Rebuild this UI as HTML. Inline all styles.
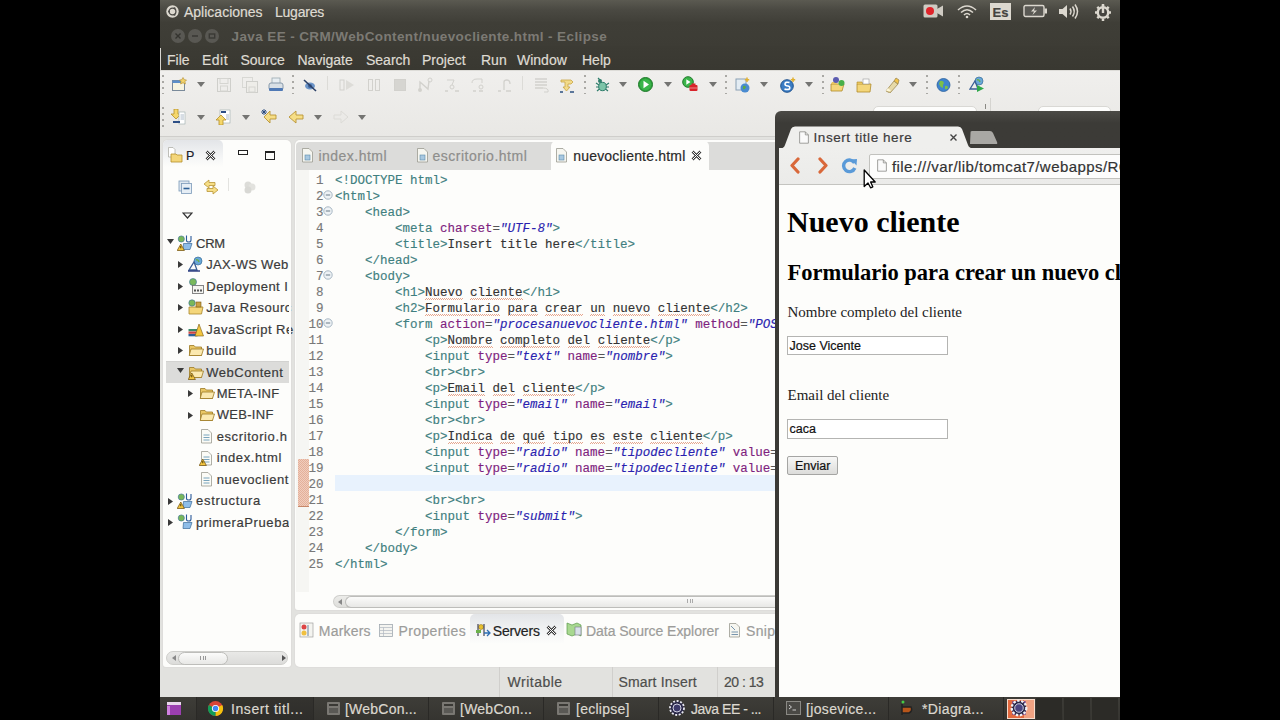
<!DOCTYPE html>
<html><head><meta charset="utf-8">
<style>
*{margin:0;padding:0;box-sizing:border-box}
html,body{width:1280px;height:720px;overflow:hidden;background:#000;font-family:"Liberation Sans",sans-serif}
.a{position:absolute}
.t{position:absolute;white-space:pre;line-height:1;-webkit-text-stroke:0.2px}
#scr{position:absolute;left:160px;top:0;width:960px;height:720px;overflow:hidden;background:#e5e4e2}
/* panel */
#panel{left:0;top:0;width:960px;height:22px;background:linear-gradient(#5b5a51,#4a4942 45%,#403f38)}
#title{left:0;top:22px;width:960px;height:24px;background:linear-gradient(#3f3e37,#3d3c35)}
#menu{left:0;top:46px;width:960px;height:24px;background:linear-gradient(#3c3b34,#393831)}
.mt{color:#dfdbd2;font-size:14px}
#tb{left:0;top:70px;width:960px;height:66px;background:linear-gradient(#f0efed,#e9e8e5);border-top:1px solid #dddcd8}
#tbline{left:0;top:136px;width:960px;height:1px;background:#cfcecb}
#body{left:0;top:137px;width:960px;height:560px;background:#e2e2df}
.pnl{background:#fdfdfb;border-radius:5px}
#taskbar{left:0;top:697px;width:960px;height:23px;background:#3b3a36}
.tk{color:#dcd8cf;font-size:14px}
.code{font-family:"Liberation Mono",monospace;font-size:12.5px;line-height:16px;white-space:pre;-webkit-text-stroke:0.15px}
.tg{color:#3f7f7f}.an{color:#7f1f7f}.av{color:#2a1fb0;font-style:italic}.tx{color:#333}.eq{color:#555}
.sq{background:repeating-conic-gradient(#e6a68e 0 25%,transparent 0 50%) 0 100%/2px 2px repeat-x}
.ln{color:#787878}
.tree{font-size:14px;color:#2e2e2e}
.dd{width:0;height:0;border-left:4px solid transparent;border-right:4px solid transparent;border-top:5px solid #747472}
.dsep{width:2px;border-left:2px dotted #a9a8a4}
</style></head><body>
<div id="scr">

 <div id="panel" class="a">
  <svg class="a" style="left:5px;top:4px" width="15" height="15" viewBox="0 0 15 15"><circle cx="7.5" cy="7.5" r="6.2" fill="#dcd8cf"/><circle cx="7.5" cy="7.5" r="3.4" fill="none" stroke="#4a4945" stroke-width="1.3"/><circle cx="7.5" cy="7.5" r="2.2" fill="#dcd8cf"/><circle cx="4" cy="7.5" r="1" fill="#4a4945"/><circle cx="9.5" cy="4.2" r="1" fill="#4a4945"/><circle cx="9.5" cy="10.8" r="1" fill="#4a4945"/></svg>
  <div class="t mt" style="left:24px;top:4.5px">Aplicaciones</div>
  <div class="t mt" style="left:115px;top:4.5px;letter-spacing:-0.23px">Lugares</div>
  <svg class="a" style="left:763px;top:4px" width="21" height="14" viewBox="0 0 21 14"><rect x="0.5" y="0.5" width="14" height="13" rx="1.5" fill="#cfcbc3"/><path d="M14 5 L20 1.5 L20 12.5 L14 9Z" fill="#cfcbc3"/><circle cx="7" cy="7" r="4" fill="#e0242b"/></svg>
  <svg class="a" style="left:797px;top:4px" width="20" height="15" viewBox="0 0 20 15"><path d="M1 6 Q10 -2 19 6" fill="none" stroke="#dcd8cf" stroke-width="1.6"/><path d="M4 8.5 Q10 3 16 8.5" fill="none" stroke="#dcd8cf" stroke-width="1.6"/><path d="M7 11 Q10 8 13 11" fill="none" stroke="#dcd8cf" stroke-width="1.6"/><circle cx="10" cy="13" r="1.3" fill="#dcd8cf"/></svg>
  <div class="a" style="left:830px;top:3px;width:21px;height:17px;background:#dcd8cf"></div>
  <div class="t" style="left:832.5px;top:5.5px;font-size:13px;color:#45443f;font-weight:bold">Es</div>
  <svg class="a" style="left:863px;top:4px" width="25" height="14" viewBox="0 0 25 14"><rect x="1" y="1.5" width="20" height="11" rx="1.5" fill="#5a5954" stroke="#dcd8cf" stroke-width="1.4"/><rect x="21.5" y="4.5" width="2.5" height="5" fill="#dcd8cf"/><path d="M12 3 L8 7.5 L11 7.5 L9.5 11 L14 6.5 L11 6.5Z" fill="#dcd8cf"/></svg>
  <svg class="a" style="left:898px;top:3px" width="21" height="17" viewBox="0 0 21 17"><path d="M1 6 H4.5 L9 2 V15 L4.5 11 H1Z" fill="#dcd8cf"/><path d="M12 5.5 Q14 8.5 12 11.5" fill="none" stroke="#dcd8cf" stroke-width="1.5"/><path d="M14.5 3.5 Q18 8.5 14.5 13.5" fill="none" stroke="#dcd8cf" stroke-width="1.5"/><path d="M17 1.5 Q22 8.5 17 15.5" fill="none" stroke="#dcd8cf" stroke-width="1.5"/></svg>
  <svg class="a" style="left:934px;top:3px" width="18" height="18" viewBox="0 0 18 18"><g fill="#dcd8cf"><circle cx="9" cy="9.5" r="6.5"/></g><circle cx="9" cy="9.5" r="4" fill="#45443f"/><rect x="7.8" y="2" width="2.4" height="8" fill="#dcd8cf"/><g stroke="#dcd8cf" stroke-width="2.5"><path d="M9 1 V3"/><path d="M1 9.5 H3"/><path d="M15 9.5 H17"/><path d="M3.3 3.8 L4.8 5.3"/><path d="M14.7 3.8 L13.2 5.3"/><path d="M3.3 15.2 L4.8 13.7"/><path d="M14.7 15.2 L13.2 13.7"/><path d="M9 16 V18"/></g></svg>
 </div>
 <div id="title" class="a">
  <div class="a wb" style="left:11px;top:7px"><svg width="14" height="14" viewBox="0 0 14 14"><circle cx="7" cy="7" r="7" fill="#595853"/><path d="M4.5 4.5 L9.5 9.5 M9.5 4.5 L4.5 9.5" stroke="#34332f" stroke-width="1.4"/></svg></div>
  <div class="a wb" style="left:28px;top:7px"><svg width="14" height="14" viewBox="0 0 14 14"><circle cx="7" cy="7" r="7" fill="#595853"/><path d="M4 7 H10" stroke="#3a3935" stroke-width="1.6"/></svg></div>
  <div class="a wb" style="left:45px;top:7px"><svg width="14" height="14" viewBox="0 0 14 14"><circle cx="7" cy="7" r="7" fill="#595853"/><rect x="4.3" y="5" width="5.4" height="4" fill="none" stroke="#3a3935" stroke-width="1.4"/></svg></div>
  <div class="t" style="left:71.5px;top:7.5px;font-size:13.5px;font-weight:bold;color:#7c7a74;-webkit-text-stroke:0;letter-spacing:0.39px">Java EE - CRM/WebContent/nuevocliente.html - Eclipse</div>
 </div>
 <div id="menu" class="a">
  <div class="a" style="left:0;top:2px;width:1px;height:22px;background:#d8d6d0"></div>
  <div class="t mt" style="left:7px;top:53px;top:7px">File</div>
  <div class="t mt" style="left:42px;top:7px;letter-spacing:0.47px">Edit</div>
  <div class="t mt" style="left:80.5px;top:7px">Source</div>
  <div class="t mt" style="left:137.5px;top:7px">Navigate</div>
  <div class="t mt" style="left:206px;top:7px">Search</div>
  <div class="t mt" style="left:262px;top:7px">Project</div>
  <div class="t mt" style="left:321px;top:7px">Run</div>
  <div class="t mt" style="left:357px;top:7px">Window</div>
  <div class="t mt" style="left:422px;top:7px">Help</div>
 </div>
 <div id="tb" class="a"></div>
 <div id="tbline" class="a"></div>
 <div class="a" style="left:0;top:0">
 <div class="a" style="left:2px;top:75px;width:2px;height:19px;background:repeating-linear-gradient(#a9a8a4 0 2px,transparent 2px 6px)"></div>
 <div class="a" style="left:2px;top:107px;width:2px;height:20px;background:repeating-linear-gradient(#a9a8a4 0 2px,transparent 2px 6px)"></div>
 <svg class="a" style="left:11px;top:77px" width="16" height="16" viewBox="0 0 16 16"><rect x="1.5" y="3.5" width="12" height="10" fill="#f7f4e0" stroke="#7a8a9a"/><rect x="1.5" y="3.5" width="12" height="2.5" fill="#5d8fc9"/><path d="M12 0.5 L13.3 2.7 L15.5 3 L14 4.6 L14.4 7 L12 5.8 L9.6 7 L10 4.6 L8.5 3 L10.7 2.7Z" fill="#f2d36b" stroke="#b08a2a" stroke-width="0.6"/></svg>
 <div class="a dd" style="left:37px;top:82px"></div>
 <svg class="a" style="left:56px;top:77px" width="16" height="16" viewBox="0 0 16 16"><rect x="1.5" y="1.5" width="13" height="13" fill="none" stroke="#cfcfcb"/><rect x="4" y="1.5" width="8" height="5" fill="none" stroke="#d5d5d1"/><rect x="4.5" y="9" width="7" height="5" fill="none" stroke="#d5d5d1"/></svg>
 <svg class="a" style="left:82px;top:77px" width="16" height="16" viewBox="0 0 16 16"><rect x="0.5" y="0.5" width="10" height="10" fill="none" stroke="#d8d8d4"/><rect x="4.5" y="4.5" width="11" height="11" fill="#eeede9" stroke="#cfcfcb"/><rect x="7" y="10" width="6" height="5" fill="none" stroke="#d5d5d1"/></svg>
 <svg class="a" style="left:108px;top:77px" width="16" height="16" viewBox="0 0 16 16"><rect x="4" y="1" width="8" height="6" fill="#e8eef2" stroke="#9aa8b0" stroke-width="0.8"/><rect x="1" y="6" width="14" height="7" rx="2" fill="#d9e0e6" stroke="#8899aa"/><rect x="1" y="11" width="14" height="3" rx="1" fill="#4f79b5"/></svg>
 <div class="a" style="left:132px;top:75px;width:2px;height:19px;background:repeating-linear-gradient(#a9a8a4 0 2px,transparent 2px 6px)"></div>
 <svg class="a" style="left:142px;top:77px" width="16" height="16" viewBox="0 0 16 16"><ellipse cx="8" cy="9" rx="5" ry="3.5" fill="#6b94c8"/><circle cx="8" cy="9" r="2" fill="#3a5f95"/><path d="M2 3 L14 14" stroke="#2a3f66" stroke-width="1.6"/></svg>
 <div class="a" style="left:167px;top:76px;width:1px;height:14px;background:#dcdbd7"></div>
 <svg class="a" style="left:179px;top:77px" width="16" height="16" viewBox="0 0 16 16"><rect x="1" y="3" width="4" height="10" fill="none" stroke="#d2d1cd"/><path d="M7 3 L15 8 L7 13Z" fill="#dddcd8"/></svg>
 <svg class="a" style="left:207px;top:77px" width="16" height="16" viewBox="0 0 16 16"><rect x="1.5" y="2.5" width="4" height="11" fill="none" stroke="#d2d1cd"/><rect x="8.5" y="2.5" width="4" height="11" fill="none" stroke="#d2d1cd"/></svg>
 <svg class="a" style="left:233px;top:77px" width="16" height="16" viewBox="0 0 16 16"><rect x="1.5" y="2.5" width="11" height="11" fill="#d6d5d1" stroke="#d2d1cd"/></svg>
 <svg class="a" style="left:257px;top:77px" width="16" height="16" viewBox="0 0 16 16"><circle cx="3" cy="13" r="2" fill="#d2d1cd"/><circle cx="13" cy="3" r="2" fill="none" stroke="#d2d1cd"/><path d="M3 13 L3 5 L11 12 L12 4" fill="none" stroke="#d2d1cd" stroke-width="1.4"/></svg>
 <svg class="a" style="left:284px;top:77px" width="16" height="16" viewBox="0 0 16 16"><path d="M3 3 H10 L8 8" fill="none" stroke="#d2d1cd"/><circle cx="8" cy="10" r="2" fill="none" stroke="#d2d1cd"/><path d="M1 14 H4 M11 14 H15" stroke="#d2d1cd" stroke-width="1.5"/></svg>
 <svg class="a" style="left:310px;top:77px" width="16" height="16" viewBox="0 0 16 16"><path d="M2 6 Q2 2 7 2 H12 L12 6" fill="none" stroke="#d2d1cd"/><circle cx="11" cy="10" r="2" fill="none" stroke="#d2d1cd"/><path d="M3 14 H6 M9 14 H13" stroke="#d2d1cd" stroke-width="1.5"/></svg>
 <svg class="a" style="left:337px;top:77px" width="16" height="16" viewBox="0 0 16 16"><path d="M7 13 V5 Q7 3 10 3 Q13 3 13 7" fill="none" stroke="#d2d1cd" stroke-width="1.3"/><path d="M1 14 H4 M9 14 H14" stroke="#d2d1cd" stroke-width="1.5"/></svg>
 <div class="a" style="left:362px;top:76px;width:1px;height:14px;background:#dcdbd7"></div>
 <svg class="a" style="left:374px;top:77px" width="16" height="16" viewBox="0 0 16 16"><path d="M1 2 H13 M1 5 H13 M1 8 H13 M1 11 H9" stroke="#d2d1cd" stroke-width="1.5"/><path d="M9 11 Q15 11 14 15 L10 15" fill="none" stroke="#d2d1cd"/></svg>
 <svg class="a" style="left:399px;top:77px" width="16" height="16" viewBox="0 0 16 16"><path d="M2 3 H12 L14 5 L12 7 H9 V10 H11 L7.5 14 L4 10 H6 V5 H2Z" fill="#f2db8a" stroke="#c9a544" stroke-width="0.8"/><path d="M1 15 H4 M11 15 H15" stroke="#2d5080" stroke-width="1.6"/></svg>
 <div class="a" style="left:424px;top:75px;width:2px;height:19px;background:repeating-linear-gradient(#a9a8a4 0 2px,transparent 2px 6px)"></div>
 <svg class="a" style="left:434px;top:77px" width="16" height="16" viewBox="0 0 16 16"><ellipse cx="8.5" cy="9.5" rx="3.8" ry="4.2" fill="#7cc4a8" stroke="#2f7d6b"/><circle cx="6" cy="4" r="2" fill="#2f7d6b"/><path d="M2 6 L5 8 M2 10 H5 M3 14 L5.5 12 M15 6 L12 8 M15 10 H12 M14 14 L11.5 12 M4 1 L6 3" stroke="#2f7d6b" stroke-width="1.2"/></svg>
 <div class="a dd" style="left:459px;top:82px"></div>
 <svg class="a" style="left:478px;top:77px" width="16" height="16" viewBox="0 0 16 16"><circle cx="7.5" cy="7.5" r="7" fill="#2ea33d" stroke="#1f7a2a"/><circle cx="7.5" cy="7.5" r="5.5" fill="#3bb54a"/><path d="M5.5 3.8 L11 7.5 L5.5 11.2Z" fill="#fff"/></svg>
 <div class="a dd" style="left:504px;top:82px"></div>
 <svg class="a" style="left:522px;top:76px" width="16" height="16" viewBox="0 0 16 16"><circle cx="6" cy="6" r="5.3" fill="#3bb54a" stroke="#1f7a2a"/><path d="M4.3 3.3 L8.5 6 L4.3 8.7Z" fill="#fff"/><rect x="7.5" y="9" width="8" height="6" rx="1" fill="#d8232a"/><rect x="9.5" y="7.5" width="4" height="2" fill="#d8232a"/><path d="M7.5 12 H15.5" stroke="#f3a3a3" stroke-width="0.8"/></svg>
 <div class="a dd" style="left:549px;top:82px"></div>
 <div class="a" style="left:565px;top:75px;width:2px;height:19px;background:repeating-linear-gradient(#a9a8a4 0 2px,transparent 2px 6px)"></div>
 <svg class="a" style="left:575px;top:77px" width="16" height="16" viewBox="0 0 16 16"><rect x="1" y="2" width="10" height="11" fill="#e3ecf3" stroke="#8aa0b4"/><circle cx="10" cy="11" r="4.5" fill="#4a8bd0"/><path d="M8 9 Q10 8 11 10 Q10 13 8 12Z" fill="#5aaa45"/><path d="M12 0.5 V5 M9.8 2.7 H14.2" stroke="#e0b030" stroke-width="1.5"/></svg>
 <div class="a dd" style="left:600px;top:82px"></div>
 <svg class="a" style="left:620px;top:77px" width="16" height="16" viewBox="0 0 16 16"><circle cx="7" cy="9" r="6.3" fill="#3a7cc4" stroke="#23558f"/><path d="M9.5 5.5 Q5 4.5 5 7 Q5 9 8 9 Q10.5 9.5 9.5 12 Q7 13 4.5 12" fill="none" stroke="#fff" stroke-width="1.6"/><path d="M13 0.5 V5 M10.8 2.7 H15.2" stroke="#e0b030" stroke-width="1.5"/></svg>
 <div class="a dd" style="left:645px;top:82px"></div>
 <div class="a" style="left:662px;top:75px;width:2px;height:19px;background:repeating-linear-gradient(#a9a8a4 0 2px,transparent 2px 6px)"></div>
 <svg class="a" style="left:670px;top:76px" width="16" height="16" viewBox="0 0 16 16"><path d="M1 8 H14 L12 15 H1Z" fill="#f4d67a" stroke="#b08a2a" stroke-width="0.8"/><path d="M1 8 L2 6 H6 L7 8" fill="#e8c55f"/><circle cx="6" cy="4" r="3" fill="#5c5cb0"/><circle cx="11.5" cy="7" r="3" fill="#48b04a"/></svg>
 <svg class="a" style="left:696px;top:77px" width="16" height="16" viewBox="0 0 16 16"><path d="M1 7 H15 L14 15 H1Z" fill="#f4d67a" stroke="#b08a2a" stroke-width="0.8"/><path d="M1 7 V5 H6 L7 7" fill="#e8c55f" stroke="#b08a2a" stroke-width="0.6"/><rect x="7" y="2" width="6" height="5" fill="#fff" stroke="#999" stroke-width="0.6"/></svg>
 <svg class="a" style="left:724px;top:77px" width="16" height="16" viewBox="0 0 16 16"><path d="M2 14 L10 4 L14 7 L6 16Z" fill="#e6d9a8" stroke="#a08a50" stroke-width="0.8"/><path d="M10 4 L12 1 L15 3 L14 7Z" fill="#f2c34a" stroke="#a08a50" stroke-width="0.8"/><path d="M2 14 L4 11 L7 14Z" fill="#fff8d8"/></svg>
 <div class="a dd" style="left:749px;top:82px"></div>
 <div class="a" style="left:766px;top:75px;width:2px;height:19px;background:repeating-linear-gradient(#a9a8a4 0 2px,transparent 2px 6px)"></div>
 <svg class="a" style="left:776px;top:77px" width="16" height="16" viewBox="0 0 16 16"><circle cx="7.5" cy="8" r="6.5" fill="#3f84cf" stroke="#2a5f9a" stroke-width="0.8"/><path d="M4 4 Q7 3 8 6 Q6 8 7 11 Q4 10 3 7Z" fill="#7cbf4a"/><path d="M9 9 Q12 8 12 11 Q10 13 9 12Z" fill="#7cbf4a"/></svg>
 <div class="a" style="left:798px;top:75px;width:2px;height:19px;background:repeating-linear-gradient(#a9a8a4 0 2px,transparent 2px 6px)"></div>
 <svg class="a" style="left:809px;top:76px" width="16" height="16" viewBox="0 0 16 16"><circle cx="10" cy="5" r="4" fill="#6aa8d8" stroke="#3a6f9a" stroke-width="0.7"/><path d="M8 4 Q10 3 11 6" fill="none" stroke="#6ab04a" stroke-width="1.5"/><path d="M1 13 L6 5 L9 13Z" fill="none" stroke="#3a5f95" stroke-width="1.3"/><path d="M8 9 L15 12.5 L8 16Z" fill="#2fa84a"/></svg>
 <svg class="a" style="left:11px;top:109px" width="16" height="16" viewBox="0 0 16 16"><path d="M3 0 H7 V5 H10 L5 10 L0 5 H3Z" fill="#f5d76b" stroke="#b58f2a" stroke-width="0.8"/><rect x="8" y="3" width="6" height="12" fill="#fff" stroke="#9aa" stroke-width="0.6"/><path d="M9.5 6 H13 M9.5 8 H13 M9.5 10 H13" stroke="#9ab" stroke-width="0.8"/><rect x="2" y="12" width="7" height="2" fill="#2d4f86"/></svg>
 <div class="a dd" style="left:37px;top:115px"></div>
 <svg class="a" style="left:56px;top:109px" width="16" height="16" viewBox="0 0 16 16"><rect x="4" y="1" width="10" height="13" fill="#fff" stroke="#9aa" stroke-width="0.6"/><rect x="5" y="2" width="5" height="2" fill="#2d4f86"/><path d="M10 6 H13 M10 8 H13 M10 10 H13" stroke="#9ab" stroke-width="0.8"/><path d="M3 16 H7 V11 H10 L5 6 L0 11 H3Z" fill="#f5d76b" stroke="#b58f2a" stroke-width="0.8"/></svg>
 <div class="a dd" style="left:82px;top:115px"></div>
 <svg class="a" style="left:101px;top:109px" width="16" height="16" viewBox="0 0 16 16"><path d="M15 6 H9 V2 L3 8 L9 14 V10 H15Z" fill="#f6de86" stroke="#b99436" stroke-width="0.9"/><path d="M1 1 L5 5 M5 1 L1 5 M3 0 V6 M0 3 H6" stroke="#24457a" stroke-width="0.9"/></svg>
 <svg class="a" style="left:128px;top:109px" width="16" height="16" viewBox="0 0 16 16"><path d="M15 6 H8 V2 L1 8 L8 14 V10 H15Z" fill="#f6de86" stroke="#b99436" stroke-width="0.9"/></svg>
 <div class="a dd" style="left:154px;top:115px"></div>
 <svg class="a" style="left:173px;top:109px" width="16" height="16" viewBox="0 0 16 16"><path d="M1 6 H8 V2 L15 8 L8 14 V10 H1Z" fill="none" stroke="#dcdbd7" stroke-width="1"/></svg>
 <div class="a dd" style="left:198px;top:115px"></div>
 <div class="a" style="left:713px;top:106px;width:104px;height:12px;background:#fdfdfc;border:1px solid #d9d8d4;border-radius:5px"></div>
 <div class="a" style="left:825px;top:104px;width:1px;height:5px;background:#8a8984"></div>
 <div class="a" style="left:830px;top:98px;width:1px;height:40px;background:#d5d4d0"></div>
 <div class="a" style="left:878px;top:106px;width:73px;height:12px;background:#fdfdfc;border:1px solid #d9d8d4;border-radius:5px"></div>
 </div>
 <div id="body" class="a"></div>
 <div class="a" style="left:0;top:0">
 <div class="a" style="left:3px;top:140px;width:128px;height:527px;background:#fdfdfb;border-radius:5px 5px 3px 3px;box-shadow:0 0 0 1px #dedddb"></div>
 <div class="a" style="left:3px;top:140px;width:60px;height:27px;background:linear-gradient(#e3e5e8,#f6f7f7 70%,#fdfdfb);border-radius:5px 5px 0 0"></div>
 <svg class="a" style="left:7px;top:147px" width="16" height="16" viewBox="0 0 16 16"><path d="M1.5 0.5 H6 L8 2.5 V10 H1.5Z" fill="#fff" stroke="#b0b0a8" stroke-width="0.8"/><path d="M4 7 H9 L10 8 H15 V15 H4Z" fill="#f4d67a" stroke="#b58f2a" stroke-width="0.8"/></svg>
 <div class="t" style="left:26px;top:150.3px;font-size:12.5px;color:#1e1e2a">P</div>
 <svg class="a" style="left:45px;top:150px" width="11" height="11" viewBox="0 0 11 11"><path d="M1.5 1.5 L9.5 9.5 M9.5 1.5 L1.5 9.5" stroke="#3a3a3a" stroke-width="2.6"/><path d="M1.5 1.5 L9.5 9.5 M9.5 1.5 L1.5 9.5" stroke="#fff" stroke-width="1"/></svg>
 <div class="a" style="left:78px;top:150px;width:10px;height:5px;border:1.3px solid #222"></div>
 <div class="a" style="left:105px;top:151px;width:10px;height:9px;border:1.3px solid #222;border-top-width:2.5px"></div>
 <svg class="a" style="left:18px;top:179px" width="16" height="16" viewBox="0 0 16 16"><rect x="1" y="2" width="10" height="10" fill="#dfe8f0" stroke="#7a9ab8" stroke-width="0.8"/><rect x="3.5" y="4.5" width="10" height="10" fill="#e6eef5" stroke="#7a9ab8" stroke-width="0.8"/><path d="M5.5 9.5 H11.5" stroke="#2d5f95" stroke-width="1.6"/></svg>
 <svg class="a" style="left:43px;top:179px" width="16" height="16" viewBox="0 0 16 16"><path d="M1 5 L6 1 V3.5 H12 V6.5 H6 V9Z" fill="#f6de86" stroke="#b99436" stroke-width="0.8"/><path d="M15 11 L10 7 V9.5 H4 V12.5 H10 V15Z" fill="#f6de86" stroke="#b99436" stroke-width="0.8"/></svg>
 <div class="a" style="left:68px;top:178px;width:1px;height:13px;background:#e3e3e0"></div>
 <svg class="a" style="left:82px;top:179px" width="16" height="16" viewBox="0 0 16 16"><circle cx="6" cy="6" r="3.5" fill="#dcdcd8"/><circle cx="10" cy="8" r="3.5" fill="#e2e2de"/><circle cx="6" cy="11" r="3.5" fill="#d8d8d4"/></svg>
 <svg class="a" style="left:22px;top:212px" width="11" height="7" viewBox="0 0 11 7"><path d="M1 1 H10 L5.5 6Z" fill="none" stroke="#333" stroke-width="1.2"/></svg>
 <div class="a" style="left:5.5px;top:361px;width:123px;height:21.5px;background:#dcdcda;border-top:1px solid #d2d2d0"></div>
 <svg class="a" style="left:6.0px;top:238.4px" width="9" height="7" viewBox="0 0 9 7"><path d="M1 1 H8 L4.5 6Z" fill="#3a3a3a"/></svg>
 <svg class="a" style="left:17.0px;top:234.9px" width="16" height="16" viewBox="0 0 16 16"><circle cx="4.3" cy="4" r="3.1" fill="#79b85a" stroke="#3a6f9a" stroke-width="0.6"/><path d="M6.5 8.5 H15 L13 14.5 H6Z" fill="#8ebde8" stroke="#3a6a9a" stroke-width="0.7"/><path d="M9.5 0.5 V5.5 Q9.5 7 12 7 Q14 7 14 5 V1" stroke="#2a5a9a" stroke-width="1.1" fill="none"/><path d="M3.8 9 L7.4 15.5 H0.2Z" fill="#f3c640" stroke="#6a4a08" stroke-width="0.7"/><path d="M3.8 11 V13.3" stroke="#3a2a00" stroke-width="0.9"/></svg>
 <div class="t" style="left:36.0px;top:236.6px;font-size:13px;color:#3a3a3a;letter-spacing:-0.21px">CRM</div>
 <svg class="a" style="left:17.2px;top:260.4px" width="7" height="9" viewBox="0 0 7 9"><path d="M1 1 L6 4.5 L1 8Z" fill="#3a3a3a"/></svg>
 <svg class="a" style="left:27.8px;top:256.4px" width="16" height="16" viewBox="0 0 16 16"><circle cx="10" cy="5" r="4" fill="#6aa8d8" stroke="#3a6f9a" stroke-width="0.7"/><path d="M8 4 Q10 3 11 6" fill="none" stroke="#6ab04a" stroke-width="1.5"/><path d="M1 14 L6 6 L9 14Z" fill="none" stroke="#3a5f95" stroke-width="1.3"/><path d="M0 15 H12" stroke="#22337a" stroke-width="1.4"/></svg>
 <div class="t" style="left:46.3px;top:258.1px;font-size:13px;color:#3a3a3a;letter-spacing:0.3px">JAX-WS Web</div>
 <svg class="a" style="left:17.2px;top:281.9px" width="7" height="9" viewBox="0 0 7 9"><path d="M1 1 L6 4.5 L1 8Z" fill="#3a3a3a"/></svg>
 <svg class="a" style="left:27.8px;top:277.9px" width="16" height="16" viewBox="0 0 16 16"><circle cx="5" cy="4" r="3.5" fill="#79b85a" stroke="#3a6f9a" stroke-width="0.6"/><rect x="4.5" y="7.5" width="11" height="8" fill="#f4f4f0" stroke="#6a6a6a" stroke-width="0.8"/><path d="M6 12.5 H14" stroke="#555" stroke-width="1.8" stroke-dasharray="2 1"/></svg>
 <div class="t" style="left:46.3px;top:279.6px;font-size:13px;color:#3a3a3a;letter-spacing:0.45px">Deployment I</div>
 <svg class="a" style="left:17.2px;top:303.3px" width="7" height="9" viewBox="0 0 7 9"><path d="M1 1 L6 4.5 L1 8Z" fill="#3a3a3a"/></svg>
 <svg class="a" style="left:27.8px;top:299.3px" width="16" height="16" viewBox="0 0 16 16"><circle cx="4" cy="4" r="3.2" fill="#79b85a" stroke="#3a6f9a" stroke-width="0.6"/><path d="M1 8 H15 L13.5 15 H1Z" fill="#f4d67a" stroke="#a8862c" stroke-width="0.8"/><rect x="8" y="3" width="5" height="5" fill="#c9a144" stroke="#7a5a10" stroke-width="0.6"/></svg>
 <div class="t" style="left:46.3px;top:301.1px;font-size:13px;color:#3a3a3a;letter-spacing:0.5px">Java Resourc</div>
 <svg class="a" style="left:17.2px;top:324.8px" width="7" height="9" viewBox="0 0 7 9"><path d="M1 1 L6 4.5 L1 8Z" fill="#3a3a3a"/></svg>
 <svg class="a" style="left:27.8px;top:320.8px" width="16" height="16" viewBox="0 0 16 16"><rect x="0.5" y="8" width="9" height="2.3" fill="#3a8a6a"/><rect x="0.5" y="10.5" width="9" height="2.3" fill="#c44"/><rect x="0.5" y="13" width="9" height="2.3" fill="#2d5f95"/><path d="M11 3 L15.5 15 H7Z" fill="#f3c640" stroke="#7a5a10" stroke-width="0.6"/></svg>
 <div class="t" style="left:46.3px;top:322.5px;font-size:13px;color:#3a3a3a;letter-spacing:0.5px">JavaScript Re</div>
 <svg class="a" style="left:17.2px;top:346.3px" width="7" height="9" viewBox="0 0 7 9"><path d="M1 1 L6 4.5 L1 8Z" fill="#3a3a3a"/></svg>
 <svg class="a" style="left:27.8px;top:342.3px" width="16" height="16" viewBox="0 0 16 16"><path d="M1.5 3.5 H6 L7.3 5 H13.5 V13.5 H1.5Z" fill="#e9c766" stroke="#9c7a24" stroke-width="0.8"/><path d="M3 7 H15.5 L13.5 13.5 H1.2Z" fill="#fbe9b0" stroke="#9c7a24" stroke-width="0.8"/></svg>
 <div class="t" style="left:46.3px;top:344.0px;font-size:13px;color:#3a3a3a;letter-spacing:0.6px">build</div>
 <svg class="a" style="left:16.2px;top:367.3px" width="9" height="7" viewBox="0 0 9 7"><path d="M1 1 H8 L4.5 6Z" fill="#3a3a3a"/></svg>
 <svg class="a" style="left:27.8px;top:363.8px" width="16" height="16" viewBox="0 0 16 16"><path d="M1.5 3.5 H6 L7.3 5 H13.5 V13.5 H1.5Z" fill="#e9c766" stroke="#9c7a24" stroke-width="0.8"/><path d="M3 7 H15.5 L13.5 13.5 H1.2Z" fill="#fbe9b0" stroke="#9c7a24" stroke-width="0.8"/><path d="M3.8 9 L7.4 15.5 H0.2Z" fill="#f3c640" stroke="#6a4a08" stroke-width="0.7"/><path d="M3.8 11 V13.3" stroke="#3a2a00" stroke-width="0.9"/></svg>
 <div class="t" style="left:46.3px;top:365.5px;font-size:13px;color:#3a3a3a;letter-spacing:0.5px">WebContent</div>
 <svg class="a" style="left:27.4px;top:389.3px" width="7" height="9" viewBox="0 0 7 9"><path d="M1 1 L6 4.5 L1 8Z" fill="#3a3a3a"/></svg>
 <svg class="a" style="left:38.5px;top:385.3px" width="16" height="16" viewBox="0 0 16 16"><path d="M1.5 3.5 H6 L7.3 5 H13.5 V13.5 H1.5Z" fill="#e9c766" stroke="#9c7a24" stroke-width="0.8"/><path d="M3 7 H15.5 L13.5 13.5 H1.2Z" fill="#fbe9b0" stroke="#9c7a24" stroke-width="0.8"/></svg>
 <div class="t" style="left:56.7px;top:387.0px;font-size:13px;color:#3a3a3a;letter-spacing:0.3px">META-INF</div>
 <svg class="a" style="left:27.4px;top:410.7px" width="7" height="9" viewBox="0 0 7 9"><path d="M1 1 L6 4.5 L1 8Z" fill="#3a3a3a"/></svg>
 <svg class="a" style="left:38.5px;top:406.7px" width="16" height="16" viewBox="0 0 16 16"><path d="M1.5 3.5 H6 L7.3 5 H13.5 V13.5 H1.5Z" fill="#e9c766" stroke="#9c7a24" stroke-width="0.8"/><path d="M3 7 H15.5 L13.5 13.5 H1.2Z" fill="#fbe9b0" stroke="#9c7a24" stroke-width="0.8"/></svg>
 <div class="t" style="left:56.7px;top:408.4px;font-size:13px;color:#3a3a3a;letter-spacing:0.3px">WEB-INF</div>
 <svg class="a" style="left:39.0px;top:428.2px" width="16" height="16" viewBox="0 0 16 16"><path d="M2.5 1.5 H9 L12.5 5 V15 H2.5Z" fill="#fbfbf6" stroke="#9a9a90" stroke-width="0.8"/><path d="M4.5 7 H10.5 M4.5 9.5 H10.5 M4.5 12 H10.5" stroke="#6a9ab5" stroke-width="0.9"/></svg>
 <div class="t" style="left:56.7px;top:429.9px;font-size:13px;color:#3a3a3a;letter-spacing:0.6px">escritorio.h</div>
 <svg class="a" style="left:39.0px;top:449.7px" width="16" height="16" viewBox="0 0 16 16"><path d="M2.5 1.5 H9 L12.5 5 V15 H2.5Z" fill="#fbfbf6" stroke="#9a9a90" stroke-width="0.8"/><path d="M4.5 7 H10.5 M4.5 9.5 H10.5 M4.5 12 H10.5" stroke="#6a9ab5" stroke-width="0.9"/><path d="M3.8 9 L7.4 15.5 H0.2Z" fill="#f3c640" stroke="#6a4a08" stroke-width="0.7"/><path d="M3.8 11 V13.3" stroke="#3a2a00" stroke-width="0.9"/></svg>
 <div class="t" style="left:56.7px;top:451.4px;font-size:13px;color:#3a3a3a;letter-spacing:0.6px">index.html</div>
 <svg class="a" style="left:39.0px;top:471.2px" width="16" height="16" viewBox="0 0 16 16"><path d="M2.5 1.5 H9 L12.5 5 V15 H2.5Z" fill="#fbfbf6" stroke="#9a9a90" stroke-width="0.8"/><path d="M4.5 7 H10.5 M4.5 9.5 H10.5 M4.5 12 H10.5" stroke="#6a9ab5" stroke-width="0.9"/></svg>
 <div class="t" style="left:56.7px;top:472.9px;font-size:13px;color:#3a3a3a;letter-spacing:0.6px">nuevoclient</div>
 <svg class="a" style="left:7.0px;top:496.7px" width="7" height="9" viewBox="0 0 7 9"><path d="M1 1 L6 4.5 L1 8Z" fill="#3a3a3a"/></svg>
 <svg class="a" style="left:17.0px;top:492.7px" width="16" height="16" viewBox="0 0 16 16"><circle cx="4.3" cy="4" r="3.1" fill="#79b85a" stroke="#3a6f9a" stroke-width="0.6"/><path d="M6.5 8.5 H15 L13 14.5 H6Z" fill="#8ebde8" stroke="#3a6a9a" stroke-width="0.7"/><path d="M9.5 0.5 V5.5 Q9.5 7 12 7 Q14 7 14 5 V1" stroke="#2a5a9a" stroke-width="1.1" fill="none"/><path d="M3.8 9 L7.4 15.5 H0.2Z" fill="#f3c640" stroke="#6a4a08" stroke-width="0.7"/><path d="M3.8 11 V13.3" stroke="#3a2a00" stroke-width="0.9"/></svg>
 <div class="t" style="left:36.0px;top:494.4px;font-size:13px;color:#3a3a3a;letter-spacing:0.72px">estructura</div>
 <svg class="a" style="left:7.0px;top:518.1px" width="7" height="9" viewBox="0 0 7 9"><path d="M1 1 L6 4.5 L1 8Z" fill="#3a3a3a"/></svg>
 <svg class="a" style="left:17.0px;top:514.1px" width="16" height="16" viewBox="0 0 16 16"><circle cx="4.3" cy="4" r="3.1" fill="#79b85a" stroke="#3a6f9a" stroke-width="0.6"/><path d="M6.5 8.5 H15 L13 14.5 H6Z" fill="#8ebde8" stroke="#3a6a9a" stroke-width="0.7"/><path d="M9.5 0.5 V5.5 Q9.5 7 12 7 Q14 7 14 5 V1" stroke="#2a5a9a" stroke-width="1.1" fill="none"/></svg>
 <div class="t" style="left:36.0px;top:515.9px;font-size:13px;color:#3a3a3a;letter-spacing:0.6px">primeraPrueba</div>
 <div class="a" style="left:129px;top:160px;width:2px;height:505px;background:#fdfdfb"></div>
 <div class="a" style="left:6px;top:651px;width:122px;height:14px;background:linear-gradient(#e9e9e7,#dcdcda);border-radius:7px;border:1px solid #cfcfcc"></div>
 <div class="a" style="left:18px;top:651.5px;width:50px;height:13px;background:linear-gradient(#fbfbfa,#e8e8e6);border-radius:7px;border:1px solid #bdbdba"></div>
 <svg class="a" style="left:11px;top:654px" width="6" height="8" viewBox="0 0 6 8"><path d="M5 1 L1 4 L5 7Z" fill="#888"/></svg>
 <svg class="a" style="left:121px;top:654px" width="6" height="8" viewBox="0 0 6 8"><path d="M1 1 L5 4 L1 7Z" fill="#555"/></svg>
 <div class="a" style="left:40px;top:656px;width:1px;height:4px;background:#999"></div>
 <div class="a" style="left:42.5px;top:656px;width:1px;height:4px;background:#999"></div>
 <div class="a" style="left:45px;top:656px;width:1px;height:4px;background:#999"></div>
 </div>
 <div class="a" style="left:0;top:0">
 <div class="a" style="left:135px;top:140px;width:482px;height:470px;background:#fdfdfb;border-radius:5px 0 0 3px;box-shadow:0 0 0 1px #dedddb"></div>
 <div class="a" style="left:136px;top:141.5px;width:481px;height:28.5px;background:#dcdcda;border-radius:4px 0 0 0"></div>
 <div class="a" style="left:390.5px;top:141px;width:158px;height:30px;background:#fdfdfb;border-radius:5px 5px 0 0"></div>
 <svg class="a" style="left:140px;top:147px" width="16" height="16" viewBox="0 0 16 16"><path d="M2.5 1.5 H9 L12.5 5 V15 H2.5Z" fill="#f6f6f0" stroke="#9a9a90" stroke-width="0.8"/><rect x="5" y="8" width="5" height="5" fill="#a8c8e0" stroke="#5a8aaa" stroke-width="0.6"/></svg>
 <div class="t" style="left:158.5px;top:149.4px;font-size:14px;color:#8e8e8c;letter-spacing:0.47px">index.html</div>
 <svg class="a" style="left:254.5px;top:147px" width="16" height="16" viewBox="0 0 16 16"><path d="M2.5 1.5 H9 L12.5 5 V15 H2.5Z" fill="#f6f6f0" stroke="#9a9a90" stroke-width="0.8"/><rect x="5" y="8" width="5" height="5" fill="#a8c8e0" stroke="#5a8aaa" stroke-width="0.6"/></svg>
 <div class="t" style="left:272.4px;top:149.4px;font-size:14px;color:#8e8e8c;letter-spacing:0.52px">escritorio.html</div>
 <svg class="a" style="left:394px;top:147px" width="16" height="16" viewBox="0 0 16 16"><path d="M2.5 1.5 H9 L12.5 5 V15 H2.5Z" fill="#f6f6f0" stroke="#9a9a90" stroke-width="0.8"/><rect x="5" y="8" width="5" height="5" fill="#a8c8e0" stroke="#5a8aaa" stroke-width="0.6"/></svg>
 <div class="t" style="left:413.20000000000005px;top:149.4px;font-size:14px;color:#2a2a2a;letter-spacing:0.20px">nuevocliente.html</div>
 <svg class="a" style="left:531px;top:150px" width="11" height="11" viewBox="0 0 11 11"><path d="M1.5 1.5 L9.5 9.5 M9.5 1.5 L1.5 9.5" stroke="#3a3a3a" stroke-width="2.6"/><path d="M1.5 1.5 L9.5 9.5 M9.5 1.5 L1.5 9.5" stroke="#fff" stroke-width="1"/></svg>
 <div class="a" style="left:136px;top:170px;width:13px;height:422px;background:#f6f6f3"></div>
 <div class="a" style="left:149px;top:170px;width:24px;height:422px;background:#fdfdfb"></div>
 <div class="a" style="left:138px;top:459px;width:11px;height:48px;background:repeating-conic-gradient(#e4b09a 0 25%,#f0cdbd 0 50%) 0 0/2px 2px;box-shadow:inset 0 -1px #c8886a"></div>
 <div class="a" style="left:175px;top:475px;width:440px;height:16px;background:#e8f2fd"></div>
 <pre class="a code ln" style="left:148.5px;top:172.6px;width:15px"> 1
 2
 3
 4
 5
 6
 7
 8
 9
10
11
12
13
14
15
16
17
18
19
20
21
22
23
24
25
</pre>
 <svg class="a" style="left:163px;top:190.3px" width="10" height="10" viewBox="0 0 10 10"><circle cx="5" cy="5" r="4.2" fill="#eef2f5" stroke="#9fb0bd" stroke-width="0.9"/><path d="M2.8 5 H7.2" stroke="#6a7d8a" stroke-width="1"/></svg>
 <svg class="a" style="left:163px;top:206.3px" width="10" height="10" viewBox="0 0 10 10"><circle cx="5" cy="5" r="4.2" fill="#eef2f5" stroke="#9fb0bd" stroke-width="0.9"/><path d="M2.8 5 H7.2" stroke="#6a7d8a" stroke-width="1"/></svg>
 <svg class="a" style="left:163px;top:270.3px" width="10" height="10" viewBox="0 0 10 10"><circle cx="5" cy="5" r="4.2" fill="#eef2f5" stroke="#9fb0bd" stroke-width="0.9"/><path d="M2.8 5 H7.2" stroke="#6a7d8a" stroke-width="1"/></svg>
 <svg class="a" style="left:163px;top:318.3px" width="10" height="10" viewBox="0 0 10 10"><circle cx="5" cy="5" r="4.2" fill="#eef2f5" stroke="#9fb0bd" stroke-width="0.9"/><path d="M2.8 5 H7.2" stroke="#6a7d8a" stroke-width="1"/></svg>
 <div class="a" style="left:175px;top:170px;width:440px;height:422px;overflow:hidden"><pre class="code" style="position:absolute;left:0;top:2.6px"><span class="tg">&lt;!DOCTYPE html&gt;</span>
<span class="tg">&lt;html&gt;</span>
    <span class="tg">&lt;head&gt;</span>
        <span class="tg">&lt;meta</span> <span class="an">charset</span><span class="eq">=</span><span class="av">"UTF-8"</span><span class="tg">&gt;</span>
        <span class="tg">&lt;title&gt;</span><span class="tx">Insert title here</span><span class="tg">&lt;/title&gt;</span>
    <span class="tg">&lt;/head&gt;</span>
    <span class="tg">&lt;body&gt;</span>
        <span class="tg">&lt;h1&gt;</span><span class="tx sq">Nuevo</span> <span class="tx sq">cliente</span><span class="tg">&lt;/h1&gt;</span>
        <span class="tg">&lt;h2&gt;</span><span class="tx sq">Formulario</span> <span class="tx sq">para</span> <span class="tx sq">crear</span> <span class="tx sq">un</span> <span class="tx sq">nuevo</span> <span class="tx sq">cliente</span><span class="tg">&lt;/h2&gt;</span>
        <span class="tg">&lt;form</span> <span class="an">action</span><span class="eq">=</span><span class="av">"procesanuevocliente.html"</span> <span class="an">method</span><span class="eq">=</span><span class="av">"POST"</span><span class="tg">&gt;</span>
            <span class="tg">&lt;p&gt;</span><span class="tx sq">Nombre</span> <span class="tx sq">completo</span> <span class="tx sq">del</span> <span class="tx sq">cliente</span><span class="tg">&lt;/p&gt;</span>
            <span class="tg">&lt;input</span> <span class="an">type</span><span class="eq">=</span><span class="av">"text"</span> <span class="an">name</span><span class="eq">=</span><span class="av">"nombre"</span><span class="tg">&gt;</span>
            <span class="tg">&lt;br&gt;&lt;br&gt;</span>
            <span class="tg">&lt;p&gt;</span><span class="tx sq">Email</span> <span class="tx sq">del</span> <span class="tx sq">cliente</span><span class="tg">&lt;/p&gt;</span>
            <span class="tg">&lt;input</span> <span class="an">type</span><span class="eq">=</span><span class="av">"email"</span> <span class="an">name</span><span class="eq">=</span><span class="av">"email"</span><span class="tg">&gt;</span>
            <span class="tg">&lt;br&gt;&lt;br&gt;</span>
            <span class="tg">&lt;p&gt;</span><span class="tx sq">Indica</span> <span class="tx sq">de</span> <span class="tx sq">qué</span> <span class="tx sq">tipo</span> <span class="tx sq">es</span> <span class="tx sq">este</span> <span class="tx sq">cliente</span><span class="tg">&lt;/p&gt;</span>
            <span class="tg">&lt;input</span> <span class="an">type</span><span class="eq">=</span><span class="av">"radio"</span> <span class="an">name</span><span class="eq">=</span><span class="av">"tipodecliente"</span> <span class="an">value</span><span class="eq">=</span><span class="av">"particular"</span><span class="tg">&gt;</span>
            <span class="tg">&lt;input</span> <span class="an">type</span><span class="eq">=</span><span class="av">"radio"</span> <span class="an">name</span><span class="eq">=</span><span class="av">"tipodecliente"</span> <span class="an">value</span><span class="eq">=</span><span class="av">"empresa"</span><span class="tg">&gt;</span>

            <span class="tg">&lt;br&gt;&lt;br&gt;</span>
            <span class="tg">&lt;input</span> <span class="an">type</span><span class="eq">=</span><span class="av">"submit"</span><span class="tg">&gt;</span>
        <span class="tg">&lt;/form&gt;</span>
    <span class="tg">&lt;/body&gt;</span>
<span class="tg">&lt;/html&gt;</span></pre></div>
 <div class="a" style="left:173px;top:595px;width:442px;height:13px;background:linear-gradient(#ecece9,#dededb);border-radius:7px 0 0 7px;border:1px solid #cfcfcc;border-right:none"></div>
 <div class="a" style="left:185px;top:595.5px;width:430px;height:12px;background:linear-gradient(#fbfbfa,#e8e8e6);border-radius:7px 0 0 7px;border:1px solid #bdbdba;border-right:none"></div>
 <svg class="a" style="left:177px;top:598px" width="6" height="8" viewBox="0 0 6 8"><path d="M5 1 L1 4 L5 7Z" fill="#888"/></svg>
 <div class="a" style="left:527px;top:599px;width:1px;height:4px;background:#aaa"></div>
 <div class="a" style="left:529.5px;top:599px;width:1px;height:4px;background:#aaa"></div>
 <div class="a" style="left:532px;top:599px;width:1px;height:4px;background:#aaa"></div>
 <div class="a" style="left:135px;top:614px;width:482px;height:53px;background:#fdfdfb;border-radius:5px 0 0 5px;box-shadow:0 0 0 1px #dedddb"></div>
 <div class="a" style="left:310px;top:614px;width:94px;height:30px;background:linear-gradient(#e3e5e8,#f6f7f7 70%,#fdfdfb);border-radius:5px 5px 0 0"></div>
 <svg class="a" style="left:139px;top:622px" width="16" height="16" viewBox="0 0 16 16"><rect x="1" y="1" width="13" height="14" fill="#f4f4f0" stroke="#a0a0a0" stroke-width="0.7"/><circle cx="5" cy="5" r="2.5" fill="#d44"/><circle cx="5" cy="11" r="2.5" fill="#f0c040"/><path d="M9 3 V14" stroke="#9ab" stroke-width="1.5"/></svg>
 <div class="t" style="left:158.8px;top:623.9px;font-size:14px;color:#9c9c9a;letter-spacing:0.20px">Markers</div>
 <svg class="a" style="left:218px;top:622px" width="16" height="16" viewBox="0 0 16 16"><rect x="1.5" y="2.5" width="13" height="12" fill="#f4f4f0" stroke="#a0a8b0" stroke-width="0.8"/><path d="M1.5 5.5 H14.5 M1.5 8.5 H14.5 M1.5 11.5 H14.5 M5.5 5.5 V14.5" stroke="#b0b8c0" stroke-width="0.7"/></svg>
 <div class="t" style="left:238.60000000000002px;top:623.9px;font-size:14px;color:#9c9c9a;letter-spacing:0.36px">Properties</div>
 <svg class="a" style="left:315px;top:622px" width="16" height="16" viewBox="0 0 16 16"><circle cx="6" cy="5" r="2.5" fill="#e8c030" stroke="#8a6a10" stroke-width="0.5"/><path d="M3 2 V14 M9 2 V14" stroke="#445" stroke-width="1.2"/><rect x="1" y="8" width="5" height="3" fill="#6ab04a"/><path d="M9 11 H15 M12 8 L15 11 L12 14" stroke="#2d6fb5" stroke-width="1.3" fill="none"/></svg>
 <div class="t" style="left:332.8px;top:623.9px;font-size:14px;color:#222;letter-spacing:-0.19px">Servers</div>
 <svg class="a" style="left:386px;top:625px" width="11" height="11" viewBox="0 0 11 11"><path d="M1.5 1.5 L9.5 9.5 M9.5 1.5 L1.5 9.5" stroke="#3a3a3a" stroke-width="2.6"/><path d="M1.5 1.5 L9.5 9.5 M9.5 1.5 L1.5 9.5" stroke="#fff" stroke-width="1"/></svg>
 <svg class="a" style="left:406px;top:621px" width="16" height="16" viewBox="0 0 16 16"><path d="M1 2 L6 4 L11 2 L15 4 V15 L11 13 L6 15 L1 13Z" fill="#a8d890" stroke="#5a9a4a" stroke-width="0.7"/><rect x="9" y="6" width="6" height="8" fill="#d8e0e8" stroke="#778" stroke-width="0.6"/></svg>
 <div class="t" style="left:426px;top:624.0px;font-size:14px;color:#9c9c9a;letter-spacing:-0.05px">Data Source Explorer</div>
 <svg class="a" style="left:567px;top:622px" width="16" height="16" viewBox="0 0 16 16"><path d="M2.5 1.5 H9 L12.5 5 V15 H2.5Z" fill="#f6f6f0" stroke="#9a9a90" stroke-width="0.8"/><path d="M4 4 L8 8 M4.5 10 H11 M4.5 12.5 H11" stroke="#6a8aa5" stroke-width="0.9"/></svg>
 <div class="t" style="left:586px;top:624.0px;font-size:14px;color:#9c9c9a;letter-spacing:0.3px">Snippets</div>
 <div class="a" style="left:339px;top:667px;width:1px;height:30px;background:#d0cfcc"></div>
 <div class="a" style="left:452px;top:667px;width:1px;height:30px;background:#d0cfcc"></div>
 <div class="a" style="left:556.5px;top:667px;width:1px;height:30px;background:#d0cfcc"></div>
 <div class="t" style="left:347.6px;top:674.6px;font-size:14px;color:#4e4e4c;letter-spacing:0.48px">Writable</div>
 <div class="t" style="left:458.4px;top:674.6px;font-size:14px;color:#4e4e4c;letter-spacing:0.18px">Smart Insert</div>
 <div class="t" style="left:563.9px;top:674.6px;font-size:14px;color:#4e4e4c;letter-spacing:-0.49px">20 : 13</div>
 </div>
 <div class="a" style="left:0;top:0">
 <div class="a" style="left:615px;top:111px;width:360px;height:586px;background:linear-gradient(#4b4a46,#3c3b37 12px,#3a3935);border-radius:6px 6px 0 0"></div>
 <svg class="a" style="left:615px;top:125px" width="240" height="25" viewBox="0 0 240 25"><path d="M5 24 Q9 23 10 20 L16 4 Q17 1.5 20 1.5 L183 1.5 Q186 1.5 187 4 L193 20 Q194 23 199 24 Z" fill="#efefed"/><path d="M195 19 L221 19 Q223 19 222 17 L218 8 Q217 6 215 6 L197 6 Q195 6 195.5 8 Z" fill="#a9a8a4"/></svg>
 <svg class="a" style="left:637px;top:130px" width="14" height="15" viewBox="0 0 16 16"><path d="M3 1.5 H9.5 L13 5 V14.5 H3Z" fill="#fafafa" stroke="#8a8a86" stroke-width="0.9"/><path d="M9.5 1.5 V5 H13" fill="none" stroke="#8a8a86" stroke-width="0.9"/></svg>
 <div class="t" style="left:653.5px;top:131.3px;font-size:13.5px;color:#3c3c3c;letter-spacing:0.56px">Insert title here</div>
 <svg class="a" style="left:789px;top:133px" width="9" height="9" viewBox="0 0 9 9"><path d="M1.5 1.5 L7.5 7.5 M7.5 1.5 L1.5 7.5" stroke="#444" stroke-width="1.4"/></svg>
 <div class="a" style="left:619px;top:148px;width:345px;height:36px;background:linear-gradient(#efefed,#ebebe9)"></div>
 <div class="a" style="left:619px;top:184px;width:345px;height:1px;background:#c4c4c0"></div>
 <div class="a" style="left:619px;top:185px;width:345px;height:512px;background:#fdfdfb"></div>
 <svg class="a" style="left:628px;top:157px" width="14" height="17" viewBox="0 0 14 17"><path d="M10 2 L4 8.5 L10 15" fill="none" stroke="#d9683a" stroke-width="3.2" stroke-linejoin="round" stroke-linecap="round"/></svg>
 <svg class="a" style="left:656px;top:157px" width="14" height="17" viewBox="0 0 14 17"><path d="M4 2 L10 8.5 L4 15" fill="none" stroke="#d9683a" stroke-width="3.2" stroke-linejoin="round" stroke-linecap="round"/></svg>
 <svg class="a" style="left:681px;top:157px" width="17" height="17" viewBox="0 0 17 17"><path d="M13.5 6 A5.8 5.8 0 1 0 13.8 11" fill="none" stroke="#5a9ad8" stroke-width="3.4"/><path d="M10 2.5 L16 2 L15.5 8.5Z" fill="#5a9ad8"/></svg>
 <div class="a" style="left:708.5px;top:154px;width:260px;height:24.5px;background:#fdfdfc;border:1px solid #c2c2be;border-radius:2px"></div>
 <svg class="a" style="left:715px;top:158px" width="14" height="15" viewBox="0 0 16 16"><path d="M3 1.5 H9.5 L13 5 V14.5 H3Z" fill="#fafafa" stroke="#8a8a86" stroke-width="0.9"/><path d="M9.5 1.5 V5 H13" fill="none" stroke="#8a8a86" stroke-width="0.9"/></svg>
 <div class="t" style="left:732px;top:159.1px;font-size:15px;color:#333;letter-spacing:0.43px">file:///var/lib/tomcat7/webapps/RCM</div>
 <div class="t" style="left:627px;top:206.5px;font-size:30px;font-family:'Liberation Serif',serif;-webkit-text-stroke:0;color:#000;font-weight:bold">Nuevo cliente</div>
 <div class="t" style="left:627.5px;top:261.6px;font-size:22.5px;font-family:'Liberation Serif',serif;-webkit-text-stroke:0;color:#000;font-weight:bold">Formulario para crear un nuevo cliente</div>
 <div class="t" style="left:627.5px;top:304.9px;font-size:15px;font-family:'Liberation Serif',serif;-webkit-text-stroke:0;color:#000;color:#222">Nombre completo del cliente</div>
 <div class="a" style="left:627px;top:335.8px;width:161px;height:19.5px;background:#fff;border:1px solid #a9a9a9;border-color:#b4b4b2"></div>
 <div class="t" style="left:629.5px;top:339.6px;font-size:12.5px;color:#111">Jose Vicente</div>
 <div class="t" style="left:627.5px;top:387.8px;font-size:15px;font-family:'Liberation Serif',serif;-webkit-text-stroke:0;color:#000;color:#222">Email del cliente</div>
 <div class="a" style="left:627px;top:419.3px;width:161px;height:19.5px;background:#fff;border:1px solid #a9a9a9;border-color:#b4b4b2"></div>
 <div class="t" style="left:629.5px;top:423.1px;font-size:12.5px;color:#111">caca</div>
 <div class="a" style="left:627px;top:456px;width:50.5px;height:19px;background:linear-gradient(#f7f7f6,#dcdcda);border:1px solid #a5a5a3;border-radius:2px"></div>
 <div class="t" style="left:635px;top:459.6px;font-size:12.5px;color:#111">Enviar</div>
 <svg class="a" style="left:703px;top:169px" width="14" height="20" viewBox="0 0 14 20"><path d="M1.2 1 V17.5 L5 14 L7.6 18.8 L9.8 17.8 L7.6 13 H12.2Z" fill="#fff" stroke="#000" stroke-width="1.3" stroke-linejoin="round"/></svg>
 </div>
 <div class="a" style="left:0;top:0">
 <div class="a" style="left:0px;top:697px;width:960px;height:23px;background:linear-gradient(#3e3d38,#353430)"></div>
 <div class="a" style="left:37px;top:697px;width:116px;height:23px;background:linear-gradient(#34332f,#2e2d2a)"></div>
 <div class="a" style="left:36px;top:697px;width:1px;height:23px;background:#2a2926"></div>
 <div class="a" style="left:153px;top:697px;width:1px;height:23px;background:#2a2926"></div>
 <div class="a" style="left:268px;top:697px;width:1px;height:23px;background:#2a2926"></div>
 <div class="a" style="left:383px;top:697px;width:1px;height:23px;background:#2a2926"></div>
 <div class="a" style="left:498px;top:697px;width:1px;height:23px;background:#2a2926"></div>
 <div class="a" style="left:613px;top:697px;width:1px;height:23px;background:#2a2926"></div>
 <div class="a" style="left:728px;top:697px;width:1px;height:23px;background:#2a2926"></div>
 <div class="a" style="left:843px;top:697px;width:1px;height:23px;background:#2a2926"></div>
 <svg class="a" style="left:6px;top:701px" width="16" height="15" viewBox="0 0 16 15"><rect x="1" y="1" width="14" height="13" fill="#9b3fb0"/><rect x="1" y="1" width="14" height="3" fill="#e8d8ec"/><rect x="1" y="5" width="3" height="9" fill="#d080e0"/></svg>
 <svg class="a" style="left:47px;top:700px" width="17" height="17" viewBox="0 0 17 17"><circle cx="8.5" cy="8.5" r="7.5" fill="#db4437"/><path d="M8.5 8.5 L15.2 5 A7.5 7.5 0 0 1 8.5 16 Z" fill="#f4c20d"/><path d="M8.5 8.5 L8.5 16 A7.5 7.5 0 0 1 1.8 5 Z" fill="#0f9d58"/><circle cx="8.5" cy="8.5" r="3.6" fill="#fff"/><circle cx="8.5" cy="8.5" r="2.7" fill="#4285f4"/></svg>
 <div class="t tk" style="left:71px;top:702.4px;font-size:14px;letter-spacing:0.57px">Insert titl...</div>
 <svg class="a" style="left:166px;top:701px" width="15" height="15" viewBox="0 0 15 15"><rect x="1" y="1" width="13" height="13" rx="1" fill="#7a7873"/><rect x="3" y="3" width="9" height="2" fill="#3a3935"/><rect x="3" y="7" width="9" height="5" fill="#5a5955"/></svg>
 <div class="t tk" style="left:185px;top:702.4px;font-size:14px;letter-spacing:0.22px">[WebCon...</div>
 <svg class="a" style="left:281px;top:701px" width="15" height="15" viewBox="0 0 15 15"><rect x="1" y="1" width="13" height="13" rx="1" fill="#7a7873"/><rect x="3" y="3" width="9" height="2" fill="#3a3935"/><rect x="3" y="7" width="9" height="5" fill="#5a5955"/></svg>
 <div class="t tk" style="left:300px;top:702.4px;font-size:14px;letter-spacing:0.24px">[WebCon...</div>
 <svg class="a" style="left:396px;top:701px" width="15" height="15" viewBox="0 0 15 15"><rect x="1" y="1" width="13" height="13" rx="1" fill="#7a7873"/><rect x="3" y="3" width="9" height="2" fill="#3a3935"/><rect x="3" y="7" width="9" height="5" fill="#5a5955"/></svg>
 <div class="t tk" style="left:416px;top:702.4px;font-size:14px;letter-spacing:0.26px">[eclipse]</div>
 <svg class="a" style="left:509px;top:700px" width="16" height="16" viewBox="0 0 16 16"><circle cx="8" cy="8" r="7" fill="#2c2a4a" stroke="#e8e8f0" stroke-width="1.8" stroke-dasharray="2 1.6"/><circle cx="8" cy="8" r="4" fill="#3d3a6a" stroke="#d0d0e0" stroke-width="1"/></svg>
 <div class="t tk" style="left:531px;top:702.4px;font-size:14px;letter-spacing:-0.48px">Java EE - ...</div>
 <svg class="a" style="left:626px;top:701px" width="15" height="14" viewBox="0 0 15 14"><rect x="0.5" y="0.5" width="14" height="13" fill="#4a4945" stroke="#8a8984"/><path d="M3 4 L5.5 6 L3 8 M6.5 9 H10" stroke="#ccc" stroke-width="1" fill="none"/></svg>
 <div class="t tk" style="left:646px;top:702.4px;font-size:14px;letter-spacing:0.36px">[josevice...</div>
 <svg class="a" style="left:739px;top:699px" width="16" height="18" viewBox="0 0 16 18"><circle cx="4" cy="3" r="1.5" fill="#4c4"/><path d="M3 5 V16 M3 8 H12 Q14 12 10 14 H3" fill="#b8561a" stroke="#222" stroke-width="1.5"/></svg>
 <div class="t tk" style="left:762px;top:702.4px;font-size:14px;letter-spacing:0.36px">*Diagra...</div>
 <div class="a" style="left:847px;top:698.5px;width:28px;height:20.5px;background:linear-gradient(90deg,#e2683e 0 62%,#f0a282 62%);border:1px solid #f6dccc"></div>
 <svg class="a" style="left:850px;top:699px" width="18" height="18" viewBox="0 0 16 16"><rect x="2" y="2" width="12" height="12" fill="#6a3f8a"/><circle cx="8" cy="8" r="6.5" fill="#2c2a4a" stroke="#f0f0f4" stroke-width="2" stroke-dasharray="2.2 1.4"/><circle cx="8" cy="8" r="3.8" fill="#4a4580" stroke="#d8d8e8" stroke-width="0.8"/></svg>
 <div class="a" style="left:875px;top:698px;width:27px;height:22px;background:#2c2b27;border-left:1px solid #3a3934"></div>
 <div class="a" style="left:903px;top:698px;width:27px;height:22px;background:#2c2b27;border-left:1px solid #3a3934"></div>
 <div class="a" style="left:931px;top:698px;width:27px;height:22px;background:#2c2b27;border-left:1px solid #3a3934"></div>
 </div>
</div>
</body></html>
